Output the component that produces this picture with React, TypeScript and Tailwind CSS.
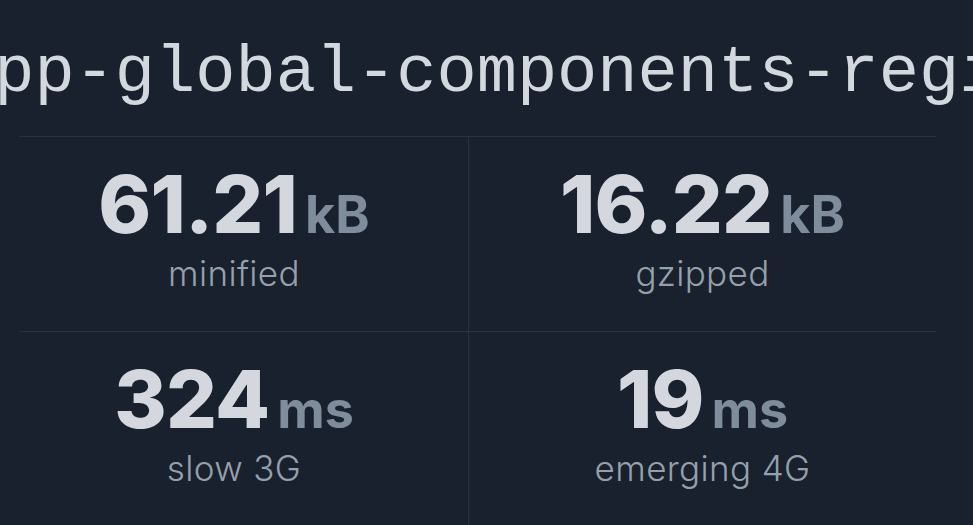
import React from 'react'

type Stat = {
  value: string
  unit: string
  label: string
}

// 体积 / 下载时间
const rows: Stat[][] = [
  [
    { value: '61.21', unit: 'kB', label: 'minified' },
    { value: '16.22', unit: 'kB', label: 'gzipped' },
  ],
  [
    { value: '324', unit: 'ms', label: 'slow 3G' },
    { value: '19', unit: 'ms', label: 'emerging 4G' },
  ],
]

const StatCell: React.FC<{ stat: Stat; divider?: boolean }> = ({ stat, divider }) => (
  <div
    className={
      divider
        ? 'flex flex-col items-center pt-[27px] pb-[30px] border-l border-[#283240]'
        : 'flex flex-col items-center pt-[27px] pb-[30px]'
    }
  >
    <div className="flex items-baseline gap-[8px]">
      <span className="text-[80px] leading-none font-extrabold tracking-[-0.01em] text-[#d4d8de]">
        {stat.value}
      </span>
      <span className="text-[52px] leading-none font-bold text-[#7f8c9c]">{stat.unit}</span>
    </div>
    <div className="mt-3 text-[35px] leading-none font-light tracking-[0.01em] text-[#96a0ab]">
      {stat.label}
    </div>
  </div>
)

export default function App() {
  return (
    <div className="w-[973px] h-[525px] overflow-hidden bg-[#18212d] font-['Inter',sans-serif]">
      {/* 包名 */}
      <div className="h-[136px] overflow-hidden whitespace-nowrap pt-[40px]">
        <h1 className="-ml-[46px] text-[67px] leading-none text-[#d3d8df] font-['Liberation_Mono',monospace]">
          app-global-components-registry
        </h1>
      </div>

      {rows.map((row, i) => (
        <div key={i}>
          <div className="ml-[19px] w-[917px] border-t border-[#283240]" />
          <div className="grid grid-cols-[468px_468px] h-[194px]">
            {row.map((stat, j) => (
              <StatCell key={stat.label} stat={stat} divider={j === 1} />
            ))}
          </div>
        </div>
      ))}
    </div>
  )
}
